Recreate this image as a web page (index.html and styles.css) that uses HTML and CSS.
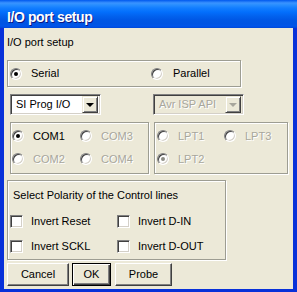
FILE: index.html
```html
<!DOCTYPE html>
<html>
<head>
<meta charset="utf-8">
<link rel="stylesheet" href="styles.css">
</head>
<body>
<div class="window">
  <div class="titlebar"><span class="title">I/O port setup</span></div>
  <div class="client">
    <div class="caption">I/O port setup</div>
    <div class="group g-port">
      <div class="opt o-serial"><span class="rb checked"></span><span class="lbl">Serial</span></div>
      <div class="opt o-parallel"><span class="rb"></span><span class="lbl">Parallel</span></div>
    </div>
    <div class="selects">
      <div class="select s1"><span class="val">SI Prog I/O</span><span class="arrow"><span class="tri"></span></span></div>
      <div class="select s2 disabled"><span class="val">Avr ISP API</span><span class="arrow"><span class="tri"></span></span></div>
    </div>
    <div class="ports">
      <div class="group g-com">
        <div class="opt"><span class="rb checked"></span><span class="lbl">COM1</span></div>
        <div class="opt dis"><span class="rb"></span><span class="lbl">COM3</span></div>
        <div class="opt dis"><span class="rb"></span><span class="lbl">COM2</span></div>
        <div class="opt dis"><span class="rb"></span><span class="lbl">COM4</span></div>
      </div>
      <div class="group g-lpt">
        <div class="opt dis"><span class="rb"></span><span class="lbl">LPT1</span></div>
        <div class="opt dis"><span class="rb"></span><span class="lbl">LPT3</span></div>
        <div class="opt dis"><span class="rb checked"></span><span class="lbl">LPT2</span></div>
      </div>
    </div>
    <div class="group g-pol">
      <div class="pol-title">Select Polarity of the Control lines</div>
      <div class="checks">
        <div class="chk"><span class="cb"></span><span class="lbl">Invert Reset</span></div>
        <div class="chk"><span class="cb"></span><span class="lbl">Invert D-IN</span></div>
        <div class="chk"><span class="cb"></span><span class="lbl">Invert SCKL</span></div>
        <div class="chk"><span class="cb"></span><span class="lbl">Invert D-OUT</span></div>
      </div>
    </div>
    <div class="buttons">
      <div class="btn b-cancel">Cancel</div>
      <div class="btn b-ok default">OK</div>
      <div class="btn b-probe">Probe</div>
    </div>
  </div>
</div>
</body>
</html>
```
FILE: styles.css
```css
* { box-sizing: border-box; }
html, body { margin: 0; padding: 0; }
body {
  width: 297px;
  height: 292px;
  overflow: hidden;
  font-family: "Liberation Sans", Arial, sans-serif;
  font-size: 11px;
  color: #000;
}
.window {
  width: 297px;
  height: 292px;
  display: flex;
  flex-direction: column;
  background: #0831D9;
}
.titlebar {
  height: 28px;
  flex: none;
  padding: 9px 0 0 7px;
  background: linear-gradient(#0058EE 0, #3A93FF 3px, #288EFF 5px, #127DFF 8px, #036FFC 12px, #0262EE 16px, #0057E5 20px, #0054E3 24px, #0055EB 26px, #0048D8 28px);
}
.title {
  color: #fff;
  font-weight: bold;
  font-size: 14px;
  line-height: 16px;
  letter-spacing: -0.4px;
  text-shadow: 1px 1px 0 #0A1883;
}
.client {
  flex: 1;
  margin: 0 4px 3px 4px;
  background: #ECE9D8;
  display: flex;
  flex-direction: column;
  padding-left: 3px;
}
.caption {
  margin-top: 8px;
  height: 13px;
  line-height: 13px;
}
.group {
  border: 1px solid #9D9D92;
  box-shadow: inset 1px 1px 0 #fff, 1px 1px 0 #fff;
}
.g-port {
  margin-top: 11px;
  width: 234px;
  height: 27px;
  display: flex;
  align-items: center;
  padding-left: 2px;
}
.opt {
  display: flex;
  align-items: center;
  height: 14px;
}
.opt .lbl { margin-left: 9px; line-height: 13px; }
.o-serial { width: 141px; }
.o-parallel .lbl { margin-left: 10px; }
.rb {
  width: 12px;
  height: 12px;
  flex: none;
  border-radius: 50%;
  background: #fff;
  border: 1px solid;
  border-color: #808080 #fff #fff #808080;
  box-shadow: inset 1px 1px 0 #404040, inset -1px -1px 0 #D4D0C8;
  display: flex;
  align-items: center;
  justify-content: center;
}
.rb.checked::after {
  content: "";
  width: 4px;
  height: 4px;
  border-radius: 50%;
  background: #000;
}
.dis .lbl { color: #A7A69C; text-shadow: 1px 1px 0 #fff; }
.dis .rb.checked::after { background: #8C8C84; }
.selects {
  margin-top: 7px;
  height: 21px;
  display: flex;
  padding-left: 3px;
}
.select {
  height: 21px;
  width: 91px;
  background: #fff;
  border: 1px solid;
  border-color: #808080 #fff #fff #808080;
  box-shadow: inset 1px 1px 0 #404040, inset -1px -1px 0 #D4D0C8;
  display: flex;
  align-items: center;
  padding: 2px 2px 2px 5px;
}
.s2 { margin-left: 52px; background: #ECE9D8; }
.select .val { flex: 1; line-height: 13px; }
.select.disabled .val { color: #A7A69C; text-shadow: 1px 1px 0 #fff; }
.arrow {
  width: 16px;
  height: 17px;
  flex: none;
  background: #ECE9D8;
  border: 1px solid;
  border-color: #ECE9D8 #404040 #404040 #ECE9D8;
  box-shadow: inset 1px 1px 0 #fff, inset -1px -1px 0 #808080;
  display: flex;
  align-items: center;
  justify-content: center;
}
.tri {
  width: 0;
  height: 0;
  border-left: 4px solid transparent;
  border-right: 4px solid transparent;
  border-top: 4px solid #000;
  margin-top: 1px;
}
.disabled .tri { border-top-color: #A7A69C; }
.ports {
  margin-top: 7px;
  height: 52px;
  display: flex;
  padding-left: 3px;
}
.g-com {
  width: 139px;
  height: 52px;
  display: grid;
  grid-template-columns: 68px 60px;
  grid-auto-rows: 23px;
  padding: 6px 0 0 1px;
}
.g-lpt {
  margin-left: 5px;
  width: 134px;
  height: 52px;
  display: grid;
  grid-template-columns: 67px 60px;
  grid-auto-rows: 23px;
  padding: 6px 0 0 2px;
}
.g-com .opt, .g-lpt .opt { height: 14px; white-space: nowrap; }
.g-pol {
  margin-top: 6px;
  width: 219px;
  height: 80px;
  padding: 7px 0 0 5px;
}
.pol-title { line-height: 14px; height: 14px; }
.checks {
  margin-top: 13px;
  margin-left: -3px;
  display: grid;
  grid-template-columns: 107px 100px;
  grid-auto-rows: 25px;
}
.chk { display: flex; align-items: center; height: 13px; }
.chk .lbl { margin-left: 8px; line-height: 13px; }
.cb {
  width: 13px;
  height: 13px;
  flex: none;
  background: #fff;
  border: 1px solid;
  border-color: #808080 #fff #fff #808080;
  box-shadow: inset 1px 1px 0 #404040, inset -1px -1px 0 #D4D0C8;
}
.buttons {
  margin-top: 3px;
  height: 23px;
  display: flex;
}
.btn {
  height: 23px;
  background: #ECE9D8;
  border: 1px solid;
  border-color: #fff #404040 #404040 #fff;
  box-shadow: inset -1px -1px 0 #808080;
  display: flex;
  align-items: center;
  justify-content: center;
  line-height: 13px;
}
.b-cancel { width: 62px; }
.b-ok { width: 39px; margin-left: 3px; }
.b-probe { width: 57px; margin-left: 4px; }
.btn.default {
  border: 1px solid #000;
  box-shadow: inset 1px 1px 0 #fff, inset -1px -1px 0 #404040, inset -2px -2px 0 #808080;
}
```
